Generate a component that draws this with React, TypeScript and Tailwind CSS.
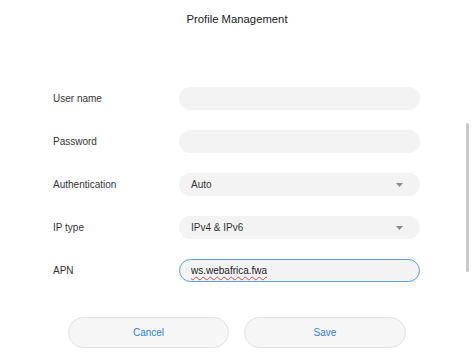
const font = { fontFamily: '"Liberation Sans", Arial, sans-serif' }

function Arrow() {
  return (
    <svg width="7" height="4" viewBox="0 0 7 4" className="shrink-0">
      <path d="M0 0 L7 0 L3.5 4 Z" fill="#8a8a8a" />
    </svg>
  )
}

function Row({ label, children }: { label: string; children: React.ReactNode }) {
  return (
    <div className="flex items-center h-[23px]">
      <div className="w-[179px] shrink-0 pl-[53px] text-[10px] text-[#333] whitespace-nowrap">{label}</div>
      {children}
    </div>
  )
}

export default function App() {
  return (
    <div className="relative w-[474px] h-[359px] bg-white overflow-hidden" style={font}>
      <h1 className="pt-[12px] text-center text-[11.3px] leading-[14px] text-[#222]">Profile Management</h1>

      <div className="mt-[61px] flex flex-col gap-[20px]">
        <Row label="User name">
          <div className="w-[241px] h-[23px] rounded-full bg-[#f3f3f3]" />
        </Row>
        <Row label="Password">
          <div className="w-[241px] h-[23px] rounded-full bg-[#f3f3f3]" />
        </Row>
        <Row label="Authentication">
          <div className="w-[241px] h-[23px] rounded-full bg-[#f3f3f3] flex items-center justify-between pl-[12px] pr-[17px] text-[10px] text-[#333]">
            <span>Auto</span>
            <Arrow />
          </div>
        </Row>
        <Row label="IP type">
          <div className="w-[241px] h-[23px] rounded-full bg-[#f3f3f3] flex items-center justify-between pl-[12px] pr-[17px] text-[10px] text-[#333]">
            <span>IPv4 &amp; IPv6</span>
            <Arrow />
          </div>
        </Row>
        <Row label="APN">
          <div className="w-[241px] h-[23px] rounded-full bg-[#f3f3f3] border border-[#5c9ce6] flex items-center pl-[11px] text-[10px] text-[#222]">
            <span className="underline decoration-wavy decoration-[#e0443e] decoration-[1px] underline-offset-[2px]">ws.webafrica.fwa</span>
          </div>
        </Row>
      </div>

      <div className="mt-[35px] flex justify-center gap-[15px]">
        <button className="w-[161px] h-[31px] rounded-full border border-[#e2e2e2] bg-[#f6f6f6] text-[10px] text-[#2f80db]">Cancel</button>
        <button className="w-[162px] h-[31px] rounded-full border border-[#e2e2e2] bg-[#f6f6f6] text-[10px] text-[#2f80db]">Save</button>
      </div>

      <div className="absolute left-[466px] top-[123px] w-[3px] h-[149px] rounded-full bg-[#c9c9c9]" />
    </div>
  )
}
